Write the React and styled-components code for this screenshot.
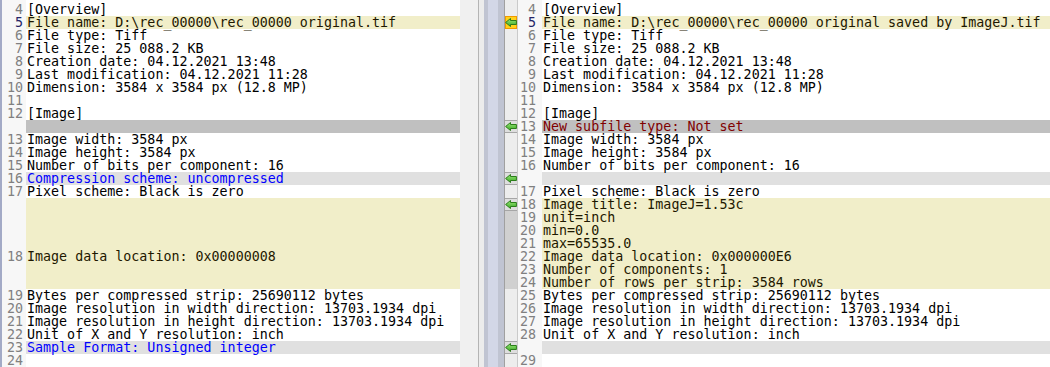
import React from 'react'
import styled, { createGlobalStyle } from 'styled-components'

const Global = createGlobalStyle`
  html, body {
    margin: 0;
    padding: 0;
    background: #ffffff;
    overflow: hidden;
  }
`

const kinds = {
  normal: { bg: 'transparent', fg: '#000000' },
  diff: { bg: '#f1eec9', fg: '#1e1800' },
  gap: { bg: '#c0c0c0', fg: '#000000' },
  ins: { bg: '#c0c0c0', fg: '#800000' },
  blank: { bg: '#e0e0e0', fg: '#000000' },
  del: { bg: '#e0e0e0', fg: '#0000ff' },
}

const left = [
  { n: 4, t: '[Overview]' },
  { n: 5, t: 'File name: D:\\rec_00000\\rec_00000 original.tif', k: 'diff', cur: true },
  { n: 6, t: 'File type: Tiff' },
  { n: 7, t: 'File size: 25 088.2 KB' },
  { n: 8, t: 'Creation date: 04.12.2021 13:48' },
  { n: 9, t: 'Last modification: 04.12.2021 11:28' },
  { n: 10, t: 'Dimension: 3584 x 3584 px (12.8 MP)' },
  { n: 11, t: '' },
  { n: 12, t: '[Image]' },
  { k: 'gap' },
  { n: 13, t: 'Image width: 3584 px' },
  { n: 14, t: 'Image height: 3584 px' },
  { n: 15, t: 'Number of bits per component: 16' },
  { n: 16, t: 'Compression scheme: uncompressed', k: 'del' },
  { n: 17, t: 'Pixel scheme: Black is zero' },
  { k: 'diff' },
  { k: 'diff' },
  { k: 'diff' },
  { k: 'diff' },
  { n: 18, t: 'Image data location: 0x00000008', k: 'diff' },
  { k: 'diff' },
  { k: 'diff' },
  { n: 19, t: 'Bytes per compressed strip: 25690112 bytes' },
  { n: 20, t: 'Image resolution in width direction: 13703.1934 dpi' },
  { n: 21, t: 'Image resolution in height direction: 13703.1934 dpi' },
  { n: 22, t: 'Unit of X and Y resolution: inch' },
  { n: 23, t: 'Sample Format: Unsigned integer', k: 'del' },
  { n: 24, t: '' },
]

const right = [
  { n: 4, t: '[Overview]' },
  { n: 5, t: 'File name: D:\\rec_00000\\rec_00000 original saved by ImageJ.tif', k: 'diff', cur: true, m: 'current' },
  { n: 6, t: 'File type: Tiff' },
  { n: 7, t: 'File size: 25 088.2 KB' },
  { n: 8, t: 'Creation date: 04.12.2021 13:48' },
  { n: 9, t: 'Last modification: 04.12.2021 11:28' },
  { n: 10, t: 'Dimension: 3584 x 3584 px (12.8 MP)' },
  { n: 11, t: '' },
  { n: 12, t: '[Image]' },
  { n: 13, t: 'New subfile type: Not set', k: 'ins', m: 'arrow' },
  { n: 14, t: 'Image width: 3584 px' },
  { n: 15, t: 'Image height: 3584 px' },
  { n: 16, t: 'Number of bits per component: 16' },
  { k: 'blank', m: 'arrow' },
  { n: 17, t: 'Pixel scheme: Black is zero' },
  { n: 18, t: 'Image title: ImageJ=1.53c', k: 'diff', m: 'arrow' },
  { n: 19, t: 'unit=inch', k: 'diff', m: 'shade' },
  { n: 20, t: 'min=0.0', k: 'diff', m: 'shade' },
  { n: 21, t: 'max=65535.0', k: 'diff', m: 'shade' },
  { n: 22, t: 'Image data location: 0x000000E6', k: 'diff', m: 'shade' },
  { n: 23, t: 'Number of components: 1', k: 'diff', m: 'shade' },
  { n: 24, t: 'Number of rows per strip: 3584 rows', k: 'diff', m: 'shade' },
  { n: 25, t: 'Bytes per compressed strip: 25690112 bytes' },
  { n: 26, t: 'Image resolution in width direction: 13703.1934 dpi' },
  { n: 27, t: 'Image resolution in height direction: 13703.1934 dpi' },
  { n: 28, t: 'Unit of X and Y resolution: inch' },
  { k: 'blank', m: 'arrow' },
  { n: 29, t: '' },
]

const Page = styled.div`
  display: flex;
  height: 367px;
  width: 1050px;
  overflow: hidden;
  font-family: 'DejaVu Sans Mono', 'Liberation Mono', monospace;
  font-size: 13.33px;
`

const Pane = styled.div`
  display: flex;
  width: ${(p) => (p.$width ? p.$width + 'px' : 'auto')};
  flex: ${(p) => (p.$width ? 'none' : '1')};
  border-left: ${(p) => p.$edge};
  min-width: 0;
`

const Gutter = styled.div`
  width: 24px;
  flex: none;
  background: #f7f7f7;
  padding-top: 3px;
  padding-right: ${(p) => p.$pad}px;
  box-sizing: border-box;
`

const Num = styled.div`
  height: 13px;
  line-height: 13px;
  text-align: right;
  color: ${(p) => (p.$cur ? '#252566' : '#808080')};
  white-space: pre;
`

const TextCol = styled.div`
  flex: 1;
  min-width: 0;
  padding-top: 3px;
  background: #ffffff;
  overflow: hidden;
`

const Line = styled.div`
  height: 13px;
  line-height: 13px;
  padding-left: 1px;
  white-space: pre;
  background: ${(p) => kinds[p.$kind].bg};
  color: ${(p) => kinds[p.$kind].fg};
`

const Strip = styled.div`
  width: 18px;
  flex: none;
  background: #f0f0f0;
  border-right: 1px solid #b4b4b4;
`

const Splitter = styled.div`
  display: flex;
  flex: none;
`

const SplitBar = styled.div`
  width: ${(p) => p.$w}px;
  background: ${(p) => p.$c};
`

const MarkerCol = styled.div`
  width: 12px;
  flex: none;
  padding-top: 3px;
  background: #ededed;
  border-right: 1px solid #cacaca;
`

const Mark = styled.div`
  height: 13px;
  display: flex;
  align-items: center;
  justify-content: center;
  box-sizing: border-box;
  background: ${(p) =>
    p.$type === 'current' ? '#ffd21a' : p.$type === 'shade' ? '#d0d0d0' : p.$type === 'arrow' ? '#dedede' : 'transparent'};
  box-shadow: ${(p) =>
    p.$type === 'current'
      ? 'inset 0 0 0 1px #f09a00'
      : p.$type === 'arrow'
        ? 'inset 0 1px #a6a6a6, inset 0 -1px #a6a6a6'
        : 'none'};
`

function Arrow() {
  return (
    <svg width="12" height="9" viewBox="0 0 12 9">
      <defs>
        <linearGradient id="ag" x1="0" y1="0" x2="0" y2="1">
          <stop offset="0" stopColor="#9be87a" />
          <stop offset="1" stopColor="#3aa823" />
        </linearGradient>
      </defs>
      <polygon
        points="0.6,4.5 5.5,0.5 5.5,2.5 11.4,2.5 11.4,6.5 5.5,6.5 5.5,8.5"
        fill="url(#ag)"
        stroke="#2b7d1a"
        strokeWidth="1"
        strokeLinejoin="round"
      />
    </svg>
  )
}

export default function App() {
  return (
    <>
      <Global />
      <Page>
        <Pane $width={458} $edge="2px solid #a3aac6">
          <Gutter $pad={3}>
            {left.map((r, i) => (
              <Num key={i} $cur={r.cur}>{r.n ?? ''}</Num>
            ))}
          </Gutter>
          <TextCol>
            {left.map((r, i) => (
              <Line key={i} $kind={r.k || 'normal'}>{r.t ?? ''}</Line>
            ))}
          </TextCol>
        </Pane>
        <Strip />
        <Splitter>
          <SplitBar $w={5} $c="#ececec" />
          <SplitBar $w={4} $c="#c0c4d2" />
          <SplitBar $w={10} $c="#d3d7e7" />
          <SplitBar $w={6} $c="#c0c4d2" />
        </Splitter>
        <Pane $edge="1px solid #a0a0a0">
          <MarkerCol>
            {right.map((r, i) => (
              <Mark key={i} $type={r.m}>
                {(r.m === 'arrow' || r.m === 'current') && <Arrow />}
              </Mark>
            ))}
          </MarkerCol>
          <Gutter $pad={6}>
            {right.map((r, i) => (
              <Num key={i} $cur={r.cur}>{r.n ?? ''}</Num>
            ))}
          </Gutter>
          <TextCol>
            {right.map((r, i) => (
              <Line key={i} $kind={r.k || 'normal'}>{r.t ?? ''}</Line>
            ))}
          </TextCol>
        </Pane>
      </Page>
    </>
  )
}
